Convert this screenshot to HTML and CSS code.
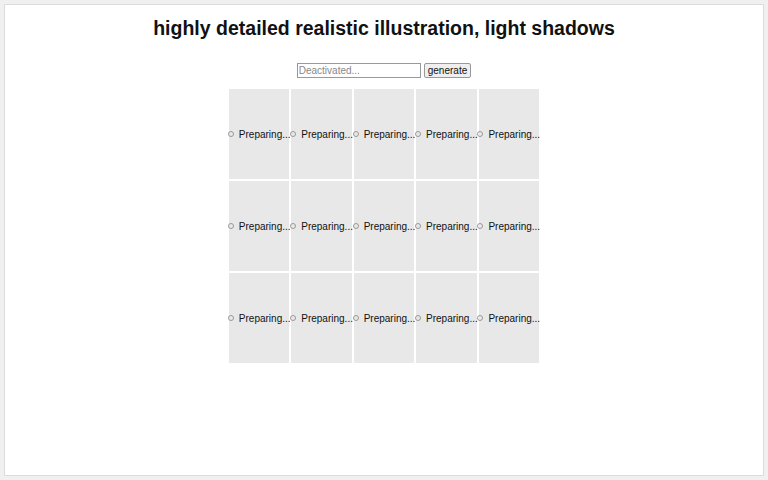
FILE: index.html
```html
<!DOCTYPE html>
<html>
<head>
  <meta charset="utf-8">
  <title>generator</title>
  <link rel="stylesheet" href="styles.css">
</head>
<body>
<div class="Panel">

  <h1 class="Prompt">highly detailed realistic illustration, light shadows</h1>

  <form class="Controls">
    <input class="PromptInput" type="text" placeholder="Deactivated...">
    <button class="Generate" type="button">generate</button>
  </form>

  <div class="Grid">
    <div class="Cell"><span class="Spinner"></span>Preparing...</div>
    <div class="Cell"><span class="Spinner"></span>Preparing...</div>
    <div class="Cell"><span class="Spinner"></span>Preparing...</div>
    <div class="Cell"><span class="Spinner"></span>Preparing...</div>
    <div class="Cell"><span class="Spinner"></span>Preparing...</div>
    <div class="Cell"><span class="Spinner"></span>Preparing...</div>
    <div class="Cell"><span class="Spinner"></span>Preparing...</div>
    <div class="Cell"><span class="Spinner"></span>Preparing...</div>
    <div class="Cell"><span class="Spinner"></span>Preparing...</div>
    <div class="Cell"><span class="Spinner"></span>Preparing...</div>
    <div class="Cell"><span class="Spinner"></span>Preparing...</div>
    <div class="Cell"><span class="Spinner"></span>Preparing...</div>
    <div class="Cell"><span class="Spinner"></span>Preparing...</div>
    <div class="Cell"><span class="Spinner"></span>Preparing...</div>
    <div class="Cell"><span class="Spinner"></span>Preparing...</div>
  </div>

</div>
</body>
</html>
```

FILE: styles.css
```css
html, body {
  margin: 0;
  height: 100%;
}
body {
  box-sizing: border-box;
  padding: 4px;
  background-color: #f0f0f0;
  font-family: "Liberation Sans", Arial, sans-serif;
  color: #111;
}
.Panel {
  box-sizing: border-box;
  height: 100%;
  background-color: #fff;
  border: 1px solid #dcdcdc;
  padding-top: 11px;
}
.Prompt {
  margin: 0;
  text-align: center;
  font-size: 19.5px;
  line-height: 24px;
  font-weight: bold;
}
.Controls {
  display: flex;
  justify-content: center;
  gap: 3px;
  margin-top: 23px;
}
.PromptInput {
  box-sizing: border-box;
  width: 124px;
  height: 15px;
  padding: 0 1px;
  border: 1px solid #999;
  font: 10px "Liberation Sans", Arial, sans-serif;
}
.PromptInput::placeholder {
  color: #888;
}
.Generate {
  box-sizing: border-box;
  height: 15px;
  padding: 0 3px;
  border: 1px solid #999;
  border-radius: 2px;
  background-color: #efefef;
  font: 10px "Liberation Sans", Arial, sans-serif;
  color: #111;
}
.Grid {
  display: grid;
  grid-template-columns: repeat(5, 60.4px);
  grid-auto-rows: 90px;
  gap: 2px;
  justify-content: center;
  margin-top: 11px;
}
.Cell {
  display: flex;
  align-items: center;
  justify-content: center;
  gap: 5px;
  background-color: #e8e8e8;
  font-size: 10px;
  white-space: nowrap;
}
.Spinner {
  flex: none;
  box-sizing: border-box;
  width: 6px;
  height: 6px;
  border: 1px solid #999;
  border-radius: 50%;
}
```
